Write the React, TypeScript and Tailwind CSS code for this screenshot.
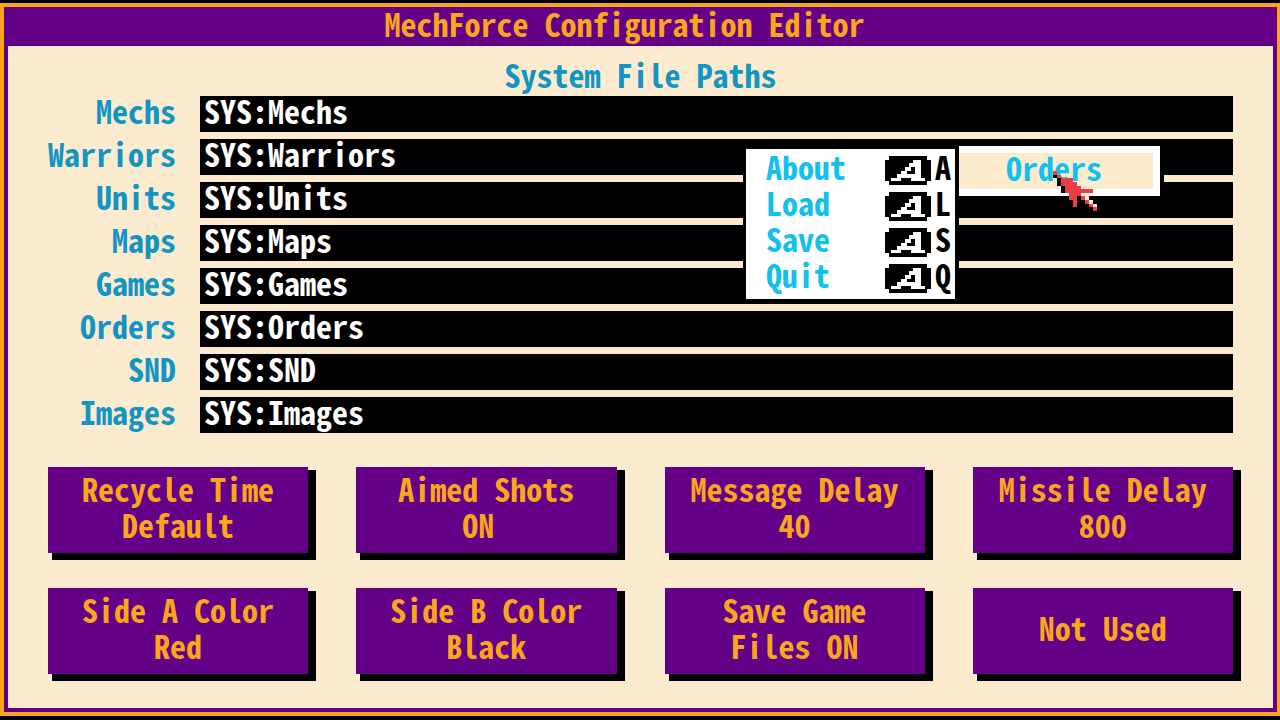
import React, { useState } from 'react';

interface PathEntry {
  label: string;
  value: string;
}

interface Option {
  title: string;
  value?: string;
}

const initialPaths: PathEntry[] = [
  { label: 'Mechs', value: 'SYS:Mechs' },
  { label: 'Warriors', value: 'SYS:Warriors' },
  { label: 'Units', value: 'SYS:Units' },
  { label: 'Maps', value: 'SYS:Maps' },
  { label: 'Games', value: 'SYS:Games' },
  { label: 'Orders', value: 'SYS:Orders' },
  { label: 'SND', value: 'SYS:SND' },
  { label: 'Images', value: 'SYS:Images' },
];

const options: Option[] = [
  { title: 'Recycle Time', value: 'Default' },
  { title: 'Aimed Shots', value: 'ON ' },
  { title: 'Message Delay', value: '40' },
  { title: 'Missile Delay', value: '800' },
  { title: 'Side A Color', value: 'Red' },
  { title: 'Side B Color', value: 'Black' },
  { title: 'Save Game', value: 'Files ON' },
  { title: 'Not Used' },
];

const menuItems = ['About', 'Load', 'Save', 'Quit'];

// Amiga key symbol shown next to each menu shortcut
const AmigaKey: React.FC = () => (
  <svg width="46" height="29" viewBox="0 0 23 8" preserveAspectRatio="none" shapeRendering="crispEdges" aria-hidden="true">
    <path fill="#000" d="M2 0h19v1h2v6h-2v1H2V7H0V1h2z" />
    <path
      fill="#fff"
      d="M14 1h4v1h-4zM12 2h6v1h-6zM10 3h3v1h-3zM15 3h3v1h-3zM8 4h3v1H8zM15 4h3v1h-3zM6 5h12v1H6zM3 6h5v1H3zM13 6h7v1h-7z"
    />
  </svg>
);

const Pointer: React.FC = () => (
  <svg width="44" height="40" viewBox="0 0 11 11" preserveAspectRatio="none" shapeRendering="crispEdges" aria-hidden="true">
    <path fill="#000" d="M0 1h1v1H0zM1 2h1v2H1zM2 4h1v2H2z" />
    <path
      fill="#ea3f46"
      d="M0 0h1v1H0zM1 1h1v1H1zM2 2h3v1H2zM2 3h4v1H2zM3 4h4v1H3zM3 5h7v1H3zM4 6h3v1H4zM4 7h2v1H4zM7 7h1v1H7zM5 8h1v2H5zM8 8h1v1H8zM9 9h1v1H9zM10 10h1v1h-1z"
    />
    <path fill="#fdebd0" d="M7 6h2v1H7zM8 7h1v1H8zM9 8h1v1H9zM10 9h1v1h-1z" />
  </svg>
);

const MenuPanel: React.FC = () => (
  <div className="absolute top-[146px] left-[743px] flex items-start">
    <div className="border-[3px] border-r-4 border-black">
      <ul className="w-[209px] bg-white py-[3px]">
        {menuItems.map((item) => (
          <li key={item}>
            <button type="button" className="flex h-9 w-full items-start pr-1 pl-5 text-left leading-7 text-[#10c1ee]">
              <span className="flex-1">{item}</span>
              <span className="pt-1">
                <AmigaKey />
              </span>
              <span className="w-5 text-right text-black">{item[0]}</span>
            </button>
          </li>
        ))}
      </ul>
    </div>
    <div className="bg-black pr-1">
      <button
        type="button"
        className="h-[50px] w-[201px] border-y-[7px] border-r-[7px] border-white bg-[#fdebd0] pr-1 pb-2 text-center leading-7 text-[#10c1ee]"
      >
        Orders
      </button>
    </div>
  </div>
);

const App: React.FC = () => {
  const [paths, setPaths] = useState(initialPaths);

  const updatePath = (index: number, value: string) => {
    setPaths(paths.map((entry, i) => (i === index ? { ...entry, value } : entry)));
  };

  return (
    <div className="relative flex min-h-screen flex-col overflow-hidden bg-black pt-[3px] pb-1 font-['Noto_Sans_CJK_SC',monospace] text-[32px] leading-9 font-bold [font-feature-settings:'hwid'] [font-variant-ligatures:none]">
      <div className="flex flex-1 flex-col border-x-4 border-y-4 border-r-[3px] border-[#faa61a] bg-[#640087] px-1 pb-1">
        <h1 className="h-[39px] pr-8 text-center leading-8 text-[#faa61a]">MechForce Configuration Editor</h1>

        <main className="flex-1 bg-[#fdebd0] pt-3 pr-10 pb-7 pl-10">
          <h2 className="h-[38px] text-center leading-8 text-[#1295c2]">System File Paths</h2>

          <div className="flex flex-col gap-[7px]">
            {paths.map((entry, index) => (
              <div key={entry.label} className="flex items-start gap-6">
                <label htmlFor={`path-${index}`} className="w-32 text-right leading-7 text-[#1295c2]">
                  {entry.label}
                </label>
                <input
                  id={`path-${index}`}
                  type="text"
                  value={entry.value}
                  onChange={(e) => updatePath(index, e.target.value)}
                  className="h-9 min-w-0 flex-1 bg-black px-1 pb-2 leading-7 text-white outline-none"
                />
              </div>
            ))}
          </div>

          <div className="mt-[34px] grid grid-cols-4 gap-x-12 gap-y-[35px]">
            {options.map((option) => (
              <button
                key={option.title}
                type="button"
                className="flex h-[86px] flex-col items-center justify-center bg-[#640087] pb-2 whitespace-pre text-[#faa61a] shadow-[6px_5px_0_2px_#000]"
              >
                <span>{option.title}</span>
                {option.value && <span>{option.value}</span>}
              </button>
            ))}
          </div>
        </main>
      </div>

      <MenuPanel />
      <div className="pointer-events-none absolute top-[171px] left-[1053px]">
        <Pointer />
      </div>
    </div>
  );
};

export default App;
